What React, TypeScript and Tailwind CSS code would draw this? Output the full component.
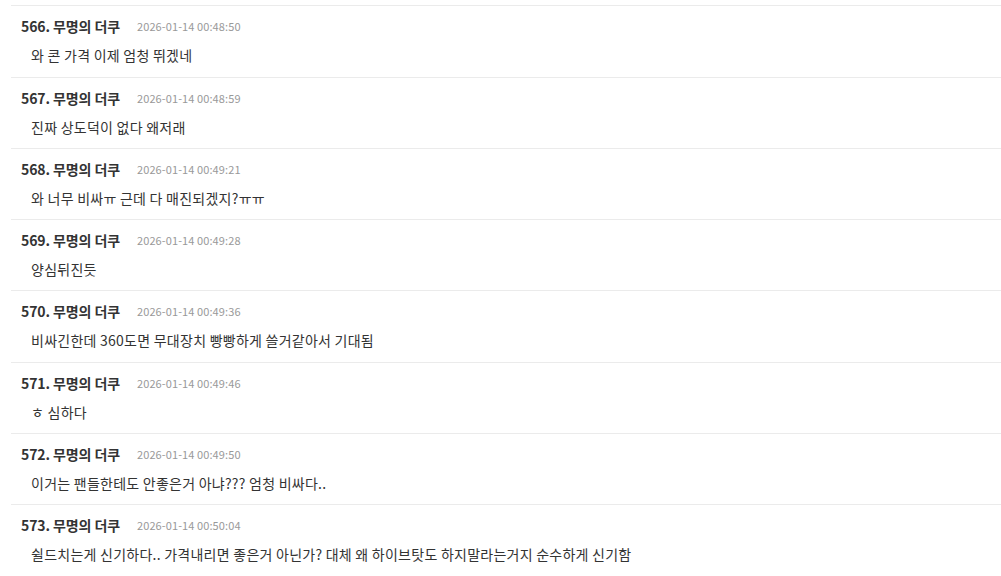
import React from "react";

const rows = [
  { n: 566, d: "2026-01-14 00:48:50", t: "와 콘 가격 이제 엄청 뛰겠네", pb: "pb-[13px]" },
  { n: 567, d: "2026-01-14 00:48:59", t: "진짜 상도덕이 없다 왜저래", pb: "pb-[12px]" },
  { n: 568, d: "2026-01-14 00:49:21", t: "와 너무 비싸ㅠ 근데 다 매진되겠지?ㅠㅠ", pb: "pb-[12px]" },
  { n: 569, d: "2026-01-14 00:49:28", t: "양심뒤진듯", pb: "pb-[12px]" },
  { n: 570, d: "2026-01-14 00:49:36", t: "비싸긴한데 360도면 무대장치 빵빵하게 쓸거같아서 기대됨", pb: "pb-[13px]" },
  { n: 571, d: "2026-01-14 00:49:46", t: "ㅎ 심하다", pb: "pb-[12px]" },
  { n: 572, d: "2026-01-14 00:49:50", t: "이거는 팬들한테도 안좋은거 아냐??? 엄청 비싸다..", pb: "pb-[12px]" },
  { n: 573, d: "2026-01-14 00:50:04", t: "쉴드치는게 신기하다.. 가격내리면 좋은거 아닌가? 대체 왜 하이브탓도 하지말라는거지 순수하게 신기함", pb: "pb-[12px]" },
];

export default function App() {
  return (
    <div
      className="w-[1001px] h-[576px] overflow-hidden bg-white pt-[5px]"
      style={{ fontFamily: '"Noto Sans CJK KR", "Noto Sans", sans-serif' }}
    >
      <div className="ml-[11px]">
        {rows.map((r) => (
          <div key={r.n} className={`border-t border-[#ebebeb] pt-[11px] ${r.pb}`}>
            <div className="flex items-center h-[18px] pl-[10px]">
              <span className="text-[14px] font-bold text-[#333333] tracking-[-0.1px]">
                {r.n}. 무명의 더쿠
              </span>
              <span className="ml-[17px] text-[11px] text-[#999999] tracking-[0.1px]">{r.d}</span>
            </div>
            <div className="mt-[11px] h-[18px] flex items-center pl-[20px] text-[14px] text-[#333333] tracking-[0.25px]">
              {r.t}
            </div>
          </div>
        ))}
      </div>
    </div>
  );
}
